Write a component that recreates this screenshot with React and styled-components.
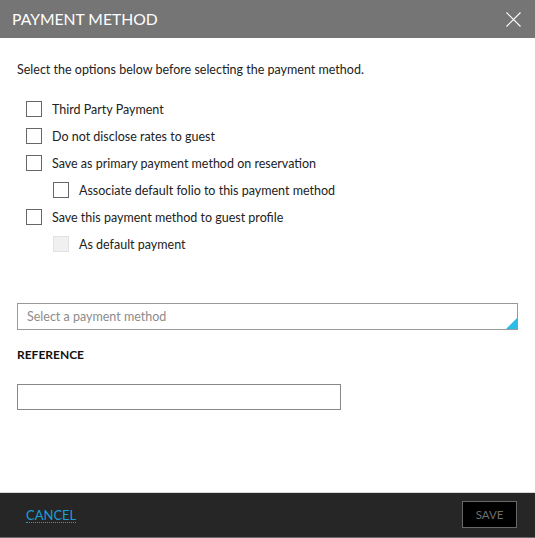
import React from 'react'
import styled, { createGlobalStyle } from 'styled-components'

const GlobalStyle = createGlobalStyle`
  html, body {
    margin: 0;
    padding: 0;
    background: #fff;
  }
  body {
    font-family: Lato, "Open Sans", sans-serif;
    color: #222;
  }
`

const Dialog = styled.div`
  width: 535px;
  height: 538px;
  display: flex;
  flex-direction: column;
  background: #fff;
  overflow: hidden;
`

const Header = styled.header`
  height: 38px;
  background: #757575;
  display: flex;
  align-items: center;
  justify-content: space-between;
  padding: 0 14px 0 12px;
  flex-shrink: 0;

  h1 {
    margin: 0;
    font-size: 15.7px;
    font-weight: 400;
    color: #fff;
  }
`

const CloseButton = styled.button`
  border: none;
  background: transparent;
  padding: 0;
  width: 16px;
  height: 16px;
  display: flex;
  align-items: center;
  justify-content: center;
  cursor: pointer;
`

const Body = styled.main`
  flex: 1;
  padding: 24px 17px 0 17px;
`

const Intro = styled.p`
  margin: 0 0 23px;
  font-size: 12.5px;
  line-height: 16px;
`

const OptionList = styled.div`
  display: flex;
  flex-direction: column;
  gap: 11px;
  padding-left: 9px;
  margin-bottom: 51px;
`

const Option = styled.label`
  display: flex;
  align-items: center;
  gap: 10px;
  height: 16px;
  font-size: 12.5px;
  margin-left: ${({ $nested }) => ($nested ? '27px' : '0')};
  color: #222;
`

const Box = styled.span`
  width: 16px;
  height: 16px;
  box-sizing: border-box;
  border: 1px solid ${({ $disabled }) => ($disabled ? '#e2e2e2' : '#666')};
  background: ${({ $disabled }) => ($disabled ? '#f0f0f0' : '#fff')};
  flex-shrink: 0;
`

const SelectBox = styled.div`
  position: relative;
  height: 27px;
  box-sizing: border-box;
  border: 1px solid #999;
  display: flex;
  align-items: center;
  padding-left: 9px;
  font-size: 12.5px;
  color: #8c8c8c;

  &::after {
    content: '';
    position: absolute;
    right: 0;
    bottom: 0;
    width: 0;
    height: 0;
    border-style: solid;
    border-width: 0 0 11px 11px;
    border-color: transparent transparent #2bbde6 transparent;
  }
`

const FieldLabel = styled.div`
  margin-top: 17px;
  font-size: 12px;
  font-weight: 700;
  color: #111;
`

const TextInput = styled.input`
  display: block;
  margin-top: 22px;
  width: 324px;
  height: 26px;
  box-sizing: border-box;
  border: 1px solid #888;
  outline: none;
  font-family: inherit;
  font-size: 13px;
  padding: 0 8px;
`

const Footer = styled.footer`
  height: 44px;
  flex-shrink: 0;
  background: #262626;
  border-top: 1px solid #d8d8d8;
  border-bottom: 1px solid #6a6a6a;
  display: flex;
  align-items: center;
  justify-content: space-between;
  padding: 0 18px 0 26px;
`

const CancelLink = styled.a`
  font-size: 13px;
  color: #1c9fd6;
  text-decoration: none;
  border-bottom: 1px dotted #1c9fd6;
  line-height: 14px;
  cursor: pointer;
  margin-top: 1px;
`

const SaveButton = styled.button`
  width: 55px;
  height: 27px;
  background: #000;
  border: 1px solid #686868;
  color: #6f6f6f;
  font-family: inherit;
  font-size: 11.5px;
  padding: 0;
  margin-top: -1px;
`

const options = [
  { label: 'Third Party Payment' },
  { label: 'Do not disclose rates to guest' },
  { label: 'Save as primary payment method on reservation' },
  { label: 'Associate default folio to this payment method', nested: true },
  { label: 'Save this payment method to guest profile' },
  { label: 'As default payment', nested: true, disabled: true },
]

export default function App() {
  return (
    <>
      <GlobalStyle />
      <Dialog>
        <Header>
          <h1>PAYMENT METHOD</h1>
          <CloseButton aria-label="Close">
            <svg width="15" height="15" viewBox="0 0 15 15">
              <path d="M0.5 0.5 L14.5 14.5 M14.5 0.5 L0.5 14.5" stroke="#fff" strokeWidth="1.1" fill="none" />
            </svg>
          </CloseButton>
        </Header>
        <Body>
          <Intro>Select the options below before selecting the payment method.</Intro>
          <OptionList>
            {options.map((o) => (
              <Option key={o.label} $nested={o.nested}>
                <Box $disabled={o.disabled} />
                {o.label}
              </Option>
            ))}
          </OptionList>
          <SelectBox>Select a payment method</SelectBox>
          <FieldLabel>REFERENCE</FieldLabel>
          <TextInput type="text" />
        </Body>
        <Footer>
          <CancelLink>CANCEL</CancelLink>
          <SaveButton>SAVE</SaveButton>
        </Footer>
      </Dialog>
    </>
  )
}
